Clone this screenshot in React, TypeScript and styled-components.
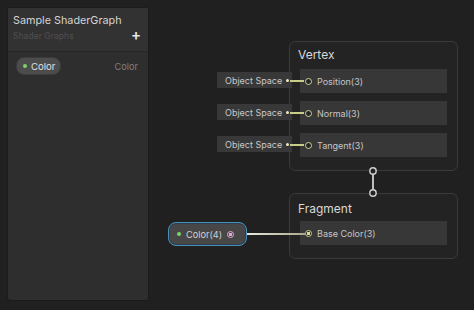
import styled, { createGlobalStyle } from "styled-components"

// Global
const GlobalStyle = createGlobalStyle`
  html, body {
    margin: 0;
    padding: 0;
    background: #202020;
  }
  body {
    font-family: "Inter", "Noto Sans", sans-serif;
    -webkit-font-smoothing: antialiased;
  }
`

// Canvas
const Canvas = styled.div`
  position: relative;
  width: 474px;
  height: 310px;
  overflow: hidden;
  background: #202020;
`

// Blackboard
const Blackboard = styled.div`
  position: absolute;
  left: 7px;
  top: 7px;
  width: 142px;
  height: 294px;
  display: flex;
  flex-direction: column;
  background: #2e2e2e;
  border: 1px solid #1b1b1b;
  box-sizing: border-box;
  border-radius: 3px;
`
const BoardHeader = styled.div`
  height: 44px;
  padding: 5px 0 0 5px;
  box-sizing: border-box;
  background: #323232;
  border-bottom: 1px solid #262626;
  position: relative;
`
const BoardTitle = styled.div`
  font-size: 10.8px;
  color: #d4d4d4;
  line-height: 15px;
`
const BoardSub = styled.div`
  font-size: 8.6px;
  color: #505050;
  margin-top: 3px;
`
const AddButton = styled.span`
  position: absolute;
  right: 7px;
  top: 17px;
  font-size: 15px;
  font-weight: 600;
  color: #e6e6e6;
`
const PropertyRow = styled.div`
  display: flex;
  align-items: center;
  justify-content: space-between;
  padding: 5px 10px 0 8px;
`
const Pill = styled.div`
  display: flex;
  align-items: center;
  gap: 4px;
  height: 16px;
  padding: 0 5px 0 6px;
  border-radius: 8px;
  background: #4c4c4c;
  border: 1px solid #3c3c3c;
  font-size: 9.6px;
  color: #e0e0e0;
`
const Dot = styled.span<{ color: string; size?: number }>`
  width: ${(p) => p.size || 4}px;
  height: ${(p) => p.size || 4}px;
  border-radius: 50%;
  background: ${(p) => p.color};
  flex-shrink: 0;
`
const PropType = styled.span`
  font-size: 9.2px;
  color: #7f7f7f;
`

// Graph nodes
const Node = styled.div<{ x: number; y: number; h: number }>`
  position: absolute;
  left: ${(p) => p.x}px;
  top: ${(p) => p.y}px;
  width: 169px;
  height: ${(p) => p.h}px;
  box-sizing: border-box;
  background: #232323;
  border: 1px solid #3a3a3a;
  border-radius: 6px;
  padding: 0 10px;
  display: flex;
  flex-direction: column;
`
const NodeTitle = styled.div<{ pad: number }>`
  height: 27px;
  box-sizing: border-box;
  padding-top: ${(p) => p.pad}px;
  margin-left: -2px;
  font-size: 12px;
  color: #d9d9d9;
  line-height: 18px;
`
const Slot = styled.div`
  position: relative;
  height: 24px;
  margin-bottom: 8px;
  background: #373737;
  display: flex;
  align-items: center;
  padding-left: 5px;
  gap: 5px;
  font-size: 9px;
  color: #c6c6c6;
  white-space: nowrap;
`
const Port = styled.span<{ ring: string; core?: string; bg?: string }>`
  width: 5px;
  height: 5px;
  border-radius: 50%;
  border: 1.5px solid ${(p) => p.ring};
  background: ${(p) =>
    p.core
      ? `radial-gradient(circle, ${p.core} 0 1.4px, ${p.bg || "#262626"} 1.8px)`
      : p.bg || "#262626"};
  flex-shrink: 0;
`
const InputChip = styled.div`
  position: absolute;
  right: calc(100% + 8px);
  top: 3px;
  width: 75px;
  height: 16px;
  box-sizing: border-box;
  background: #383838;
  display: flex;
  align-items: center;
  justify-content: space-between;
  padding: 0 3px 0 8px;
  font-size: 9px;
  color: #c8c8c8;
  white-space: nowrap;
`
const InputWire = styled.span`
  position: absolute;
  left: -10px;
  top: 11px;
  width: 14px;
  height: 2px;
  background: #c6cd8a;
`

const PropertyNode = styled.div`
  position: absolute;
  left: 168px;
  top: 222px;
  width: 79px;
  height: 24px;
  box-sizing: border-box;
  border: 1.5px solid #4b8fb8;
  border-radius: 8px;
  background: #474747;
  box-shadow: inset 0 0 0 1px #2a4050;
  display: flex;
  align-items: center;
  padding: 0 0 0 8px;
  gap: 5px;
  font-size: 9.2px;
  color: #d0d0d0;
  white-space: nowrap;
`
const Wires = styled.svg`
  position: absolute;
  left: 0;
  top: 0;
  pointer-events: none;
`

const vertexSlots = ["Position(3)", "Normal(3)", "Tangent(3)"]

const App = () => {
  return (
    <Canvas>
      <GlobalStyle />
      {/* Blackboard */}
      <Blackboard>
        <BoardHeader>
          <BoardTitle>Sample ShaderGraph</BoardTitle>
          <BoardSub>Shader Graphs</BoardSub>
          <AddButton>+</AddButton>
        </BoardHeader>
        <PropertyRow>
          <Pill>
            <Dot color="#7ed36a" />
            Color
          </Pill>
          <PropType>Color</PropType>
        </PropertyRow>
      </Blackboard>

      {/* Vertex */}
      <Node x={289} y={41} h={130}>
        <NodeTitle pad={4}>Vertex</NodeTitle>
        {vertexSlots.map((name) => (
          <Slot key={name}>
            <InputChip>
              Object Space
              <Dot color="#e9ecc4" size={3} />
            </InputChip>
            <InputWire />
            <Port ring="#cdd393" />
            {name}
          </Slot>
        ))}
      </Node>

      {/* Fragment */}
      <Node x={289} y={193} h={66}>
        <NodeTitle pad={6}>Fragment</NodeTitle>
        <Slot>
          <Port ring="#c9cf8c" core="#d9df9a" />
          Base Color(3)
        </Slot>
      </Node>

      {/* Property node */}
      <PropertyNode>
        <Dot color="#7ed36a" />
        Color(4)
        <Port ring="#e3a6d8" core="#e3a6d8" bg="#474747" />
      </PropertyNode>

      {/* Wires */}
      <Wires width={474} height={310}>
        <defs>
          <linearGradient id="colWire" x1="0" x2="1" y1="0" y2="0">
            <stop offset="0" stopColor="#e8e8e0" />
            <stop offset="1" stopColor="#a9a88a" />
          </linearGradient>
        </defs>
        <rect x={247} y={233} width={58} height={2} fill="url(#colWire)" />
        <line x1={373} y1={174} x2={373} y2={190} stroke="#bdbdbd" strokeWidth={2} />
        <circle cx={373} cy={171} r={3.2} fill="#232323" stroke="#cfcfcf" strokeWidth={1.4} />
        <circle cx={373} cy={193} r={3.2} fill="#232323" stroke="#cfcfcf" strokeWidth={1.4} />
      </Wires>
    </Canvas>
  )
}

export default App
